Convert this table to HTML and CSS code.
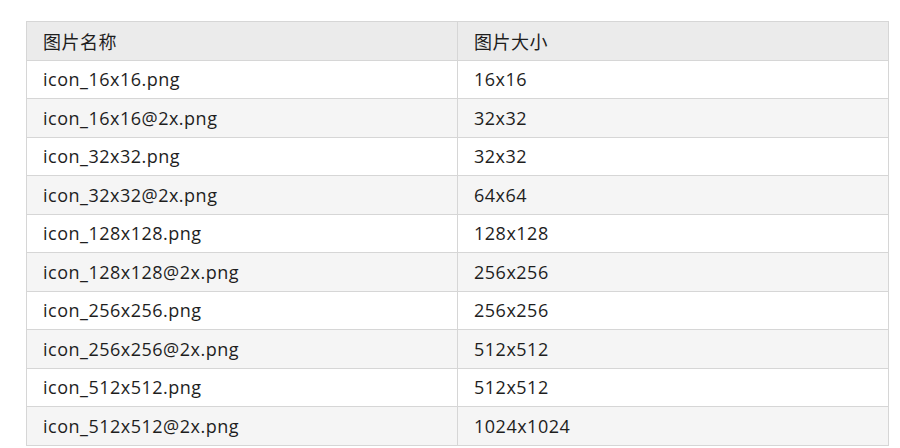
FILE: index.html
```html
<!DOCTYPE html>
<html>
<head>
<meta charset="utf-8">
<link rel="stylesheet" href="styles.css">
</head>
<body>
<div class="wrap">
<table class="tbl">
<thead>
<tr><th>图片名称</th><th>图片大小</th></tr>
</thead>
<tbody>
<tr><td>icon_16x16.png</td><td>16x16</td></tr>
<tr><td>icon_16x16@2x.png</td><td>32x32</td></tr>
<tr><td>icon_32x32.png</td><td>32x32</td></tr>
<tr><td>icon_32x32@2x.png</td><td>64x64</td></tr>
<tr><td>icon_128x128.png</td><td>128x128</td></tr>
<tr><td>icon_128x128@2x.png</td><td>256x256</td></tr>
<tr><td>icon_256x256.png</td><td>256x256</td></tr>
<tr><td>icon_256x256@2x.png</td><td>512x512</td></tr>
<tr><td>icon_512x512.png</td><td>512x512</td></tr>
<tr><td>icon_512x512@2x.png</td><td>1024x1024</td></tr>
</tbody>
</table>
</div>
</body>
</html>
```
FILE: styles.css
```css
html, body {
  margin: 0;
  padding: 0;
  background: #fff;
}
.wrap {
  padding: 21px 0 0 26px;
}
.tbl {
  border-collapse: collapse;
  width: 863px;
  font-family: "Open Sans", "Noto Sans CJK SC", sans-serif;
  font-size: 18px;
  letter-spacing: 0.5px;
  color: #1e1e1e;
  table-layout: fixed;
}
.tbl th, .tbl td {
  border: 1px solid #d6d6d6;
  padding: 0 16px;
  height: 37.5px;
  text-align: left;
  font-weight: normal;
  vertical-align: middle;
}
.tbl th:first-child, .tbl td:first-child {
  width: 398px;
}
.tbl thead tr {
  background: #ebebeb;
}
.tbl tbody tr:nth-child(even) {
  background: #f5f5f5;
}
.tbl tbody tr:nth-child(odd) {
  background: #fff;
}
```
